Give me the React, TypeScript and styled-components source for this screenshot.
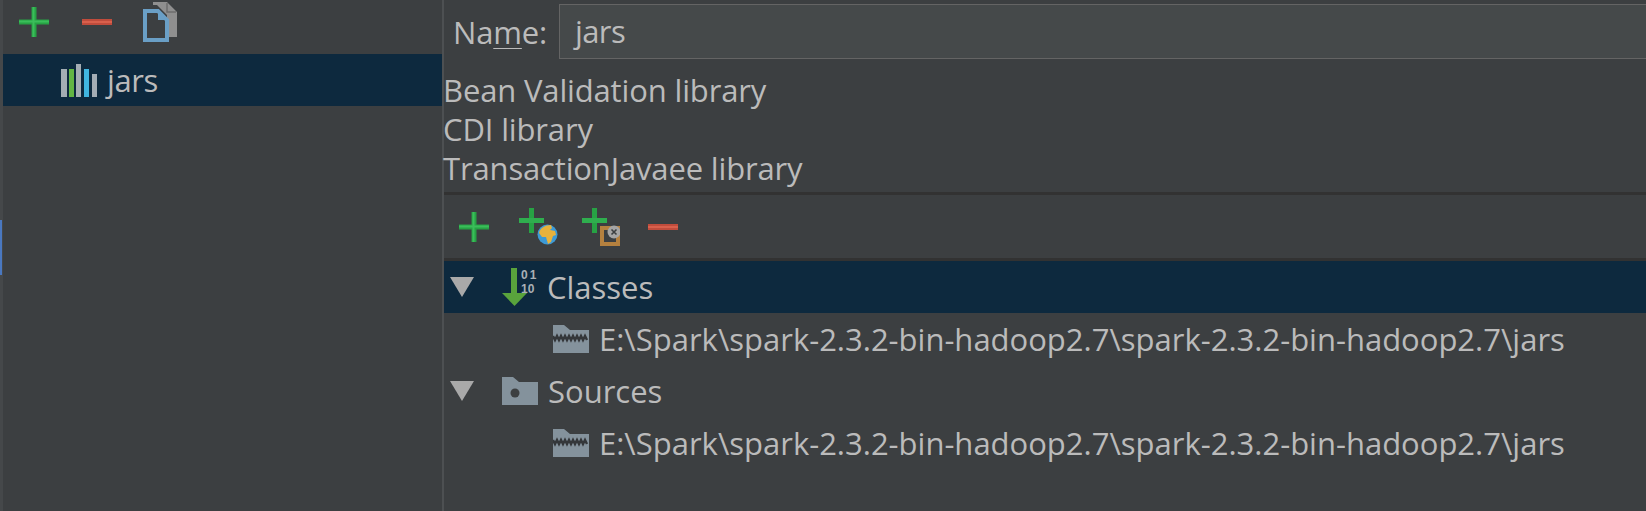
import React from "react";
import styled, { createGlobalStyle } from "styled-components";

const GlobalStyle = createGlobalStyle`
  html, body {
    margin: 0;
    padding: 0;
    background: #3c3f41;
    overflow: hidden;
  }
`;

const Page = styled.div`
  width: 1646px;
  height: 511px;
  display: flex;
  background: #3c3f41;
  color: #bbbbbb;
  font-family: "Open Sans", "Noto Sans", sans-serif;
  font-size: 31px;
  overflow: hidden;
`;

const EdgeStrip = styled.div`
  position: relative;
  width: 3px;
  flex: none;
  background: #45484a;

  &::after {
    content: "";
    position: absolute;
    left: 0;
    top: 220px;
    width: 2px;
    height: 55px;
    background: #4a78c0;
  }
`;

const LeftPanel = styled.div`
  width: 439px;
  flex: none;
  border-right: 2px solid #4d5052;
`;

const Toolbar = styled.div<{ $height: number; $pad: number; $bottom?: number }>`
  height: ${(p) => p.$height}px;
  box-sizing: border-box;
  padding-left: ${(p) => p.$pad}px;
  padding-bottom: ${(p) => p.$bottom ?? 0}px;
  display: flex;
  align-items: center;
`;

const LibraryRow = styled.div`
  height: 52px;
  background: #0d293e;
  display: flex;
  align-items: center;
  padding-left: 58px;
  gap: 10px;
  letter-spacing: -0.4px;
`;

const RightPanel = styled.div`
  flex: 1;
  min-width: 0;
  display: flex;
  flex-direction: column;
`;

const NameRow = styled.div`
  height: 55px;
  margin-top: 4px;
  display: flex;
  align-items: center;
  padding-left: 9px;
`;

const Label = styled.label`
  width: 106px;
  flex: none;
  letter-spacing: -0.15px;

  u {
    text-underline-offset: 4px;
    text-decoration-thickness: 1px;
  }
`;

const NameField = styled.div`
  flex: 1;
  height: 55px;
  box-sizing: border-box;
  margin-right: -2px;
  padding: 0 0 2px 15px;
  background: #45494a;
  border: 1px solid #646464;
  display: flex;
  align-items: center;
  letter-spacing: -0.6px;
`;

const Libraries = styled.div`
  padding-top: 12px;
  height: 136px;
  box-sizing: border-box;
  border-bottom: 3px solid #323232;
`;

const LibraryLine = styled.div`
  height: 39px;
  line-height: 39px;
  margin-left: -1px;
  letter-spacing: -0.15px;
`;

const TreeRow = styled.div<{ $selected?: boolean; $indent: number }>`
  height: 52px;
  flex: none;
  display: flex;
  align-items: center;
  padding-left: ${(p) => p.$indent}px;
  background: ${(p) => (p.$selected ? "#0d293e" : "transparent")};
`;

const Triangle = styled.span`
  width: 0;
  height: 0;
  border-left: 12px solid transparent;
  border-right: 12px solid transparent;
  border-top: 20px solid #a9a9a9;
  margin-right: 28px;
  flex: none;
`;

const IconSlot = styled.span<{ $width: number }>`
  width: ${(p) => p.$width}px;
  flex: none;
  display: flex;
  align-items: center;
`;

const TreeDivider = styled.div`
  height: 3px;
  flex: none;
  background: #323232;
`;

const PlusIcon = () => (
  <svg width={30} height={30} viewBox="0 0 30 30">
    <rect x="12.5" y="0" width="5" height="30" fill="#27a244" />
    <rect x="0" y="12.5" width="30" height="5" fill="#27a244" />
    <rect x="0" y="13.5" width="30" height="2" fill="#3bbd5a" />
    <rect x="13.5" y="0" width="2" height="30" fill="#3bbd5a" />
  </svg>
);

const MinusIcon = () => (
  <svg width={30} height={6} viewBox="0 0 30 6">
    <rect width="30" height="6" fill="#c04c3c" />
    <rect y="2" width="30" height="2" fill="#d9604c" />
  </svg>
);

const CopyIcon = () => (
  <svg width={34} height={40} viewBox="0 0 34 40">
    <path d="M10 0h14l10 10v25H24V13L14 3H10z" fill="#8f8f8f" />
    <path d="M24 1v9h9" fill="none" stroke="#6d6d6d" strokeWidth="1.5" />
    <path d="M2 9h13l9 9v20H2z" fill="#3c3f41" stroke="#6a9fc6" strokeWidth="4" />
    <path d="M15 8v10h10z" fill="#6a9fc6" />
  </svg>
);

const LibraryIcon = () => (
  <svg width={36} height={33} viewBox="0 0 36 33">
    <rect x="0" y="5" width="6" height="28" fill="#a4adb4" />
    <rect x="8" y="5" width="5" height="28" fill="#62b543" />
    <rect x="15" y="0" width="5" height="33" fill="#a4adb4" />
    <rect x="23" y="5" width="5" height="28" fill="#40b6e0" />
    <rect x="31" y="10" width="5" height="23" fill="#a4adb4" />
  </svg>
);

const SmallPlus = () => (
  <>
    <rect x="10" y="0" width="5" height="25" fill="#27a244" />
    <rect x="0" y="10" width="25" height="5" fill="#2fae4e" />
  </>
);

const PlusGlobeIcon = () => (
  <svg width={39} height={37} viewBox="0 0 39 37">
    <SmallPlus />
    <circle cx="28.5" cy="26.5" r="10" fill="#3d9ad6" />
    <path d="M20 25c1-5 6-8 12-8l1 3-2 2 5 1 1 4-3 1-2 6-3 2-2-7-4 0z" fill="#e8b23c" />
  </svg>
);

const PlusJarIcon = () => (
  <svg width={38} height={38} viewBox="0 0 38 38">
    <SmallPlus />
    <path d="M20 20h16v16H20z" fill="none" stroke="#b5813f" strokeWidth="4" />
    <circle cx="32" cy="24" r="6.5" fill="#a5a5a5" />
    <path d="M29.5 21.5l5 5m0-5l-5 5" stroke="#3c3f41" strokeWidth="1.6" />
  </svg>
);

const ClassesIcon = () => (
  <svg width={36} height={42} viewBox="0 -2 36 42">
    <rect x="9" y="0" width="6" height="27" fill="#59a33c" />
    <path d="M0 25h25L12.5 38z" fill="#59a33c" />
    <text x="19" y="10.5" fontSize="12" fill="#a9b0b5" fontFamily="Liberation Sans, sans-serif" fontWeight="700" letterSpacing="2">01</text>
    <text x="19" y="24.5" fontSize="12" fill="#a9b0b5" fontFamily="Liberation Sans, sans-serif" fontWeight="700">10</text>
  </svg>
);

const SourcesIcon = () => (
  <svg width={36} height={28} viewBox="0 0 36 28">
    <path d="M0 0h11l6 5h19v23H0z" fill="#84929c" />
    <circle cx="13" cy="16" r="4.5" fill="#3c3f41" />
  </svg>
);

const JarFolderIcon = () => (
  <svg width={36} height={28} viewBox="0 0 36 28">
    <path d="M0 0h11l6 5h19v23H0z" fill="#84929c" />
    <path
      d="M0 11l2 4 2-4 2 4 2-4 2 4 2-4 2 4 2-4 2 4 2-4 2 4 2-4 2 4 2-4 2 4 2-4 2 4"
      fill="none"
      stroke="#34373a"
      strokeWidth="2.4"
    />
  </svg>
);

const JARS_PATH = "E:\\Spark\\spark-2.3.2-bin-hadoop2.7\\spark-2.3.2-bin-hadoop2.7\\jars";

export default function App() {
  return (
    <>
      <GlobalStyle />
      <Page>
        <EdgeStrip />
        <LeftPanel>
          <Toolbar $height={54} $pad={16} $bottom={10}>
            <IconSlot $width={63}>
              <PlusIcon />
            </IconSlot>
            <IconSlot $width={61}>
              <MinusIcon />
            </IconSlot>
            <CopyIcon />
          </Toolbar>
          <LibraryRow>
            <LibraryIcon />
            <span>jars</span>
          </LibraryRow>
        </LeftPanel>
        <RightPanel>
          <NameRow>
            <Label>
              Na<u>m</u>e:
            </Label>
            <NameField>jars</NameField>
          </NameRow>
          <Libraries>
            <LibraryLine>Bean Validation library</LibraryLine>
            <LibraryLine>CDI library</LibraryLine>
            <LibraryLine>TransactionJavaee library</LibraryLine>
          </Libraries>
          <Toolbar $height={63} $pad={15}>
            <IconSlot $width={60}>
              <PlusIcon />
            </IconSlot>
            <IconSlot $width={63}>
              <PlusGlobeIcon />
            </IconSlot>
            <IconSlot $width={66}>
              <PlusJarIcon />
            </IconSlot>
            <MinusIcon />
          </Toolbar>
          <TreeDivider />
          <TreeRow $selected $indent={6}>
            <Triangle />
            <IconSlot $width={45}>
              <ClassesIcon />
            </IconSlot>
            Classes
          </TreeRow>
          <TreeRow $indent={109}>
            <IconSlot $width={46}>
              <JarFolderIcon />
            </IconSlot>
            {JARS_PATH}
          </TreeRow>
          <TreeRow $indent={6}>
            <Triangle />
            <IconSlot $width={46}>
              <SourcesIcon />
            </IconSlot>
            Sources
          </TreeRow>
          <TreeRow $indent={109}>
            <IconSlot $width={46}>
              <JarFolderIcon />
            </IconSlot>
            {JARS_PATH}
          </TreeRow>
        </RightPanel>
      </Page>
    </>
  );
}
